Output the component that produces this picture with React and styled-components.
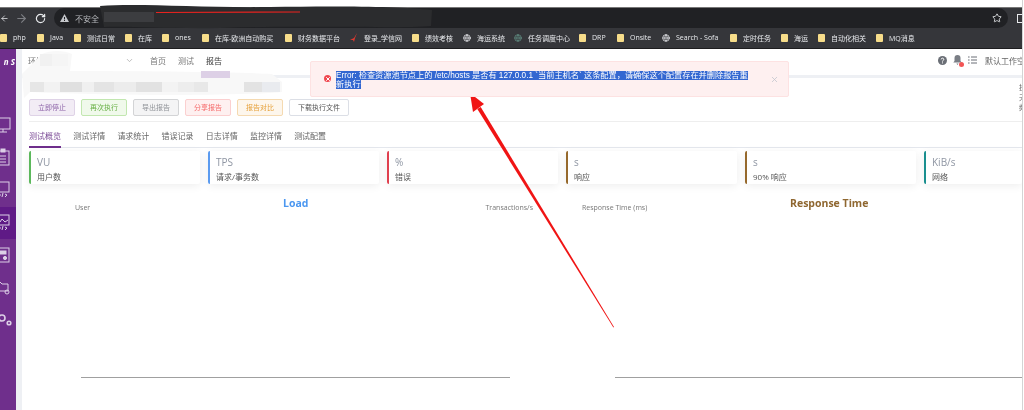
import React from 'react'
import styled, { createGlobalStyle } from 'styled-components'
import { ArrowLeft, ArrowRight, RotateCw, Star, Globe, ChevronDown, X } from 'lucide-react'

const bookmarks = [
  { label: 'php', step: 37 },
  { label: 'Java', step: 37 },
  { label: '测试日常', step: 51 },
  { label: '在库', step: 37 },
  { label: 'ones', step: 40 },
  { label: '在库-欧洲自动购买', step: 83 },
  { label: '财务数据平台', step: 65 },
  { label: '登录_学信网', kind: 'red', step: 62 },
  { label: '绩效考核', step: 51 },
  { label: '海运系统', kind: 'globe', step: 51 },
  { label: '任务调度中心', kind: 'dim', step: 65 },
  { label: 'DRP', step: 38 },
  { label: 'Onsite', step: 45 },
  { label: 'Search - Sofa', kind: 'globe', step: 68 },
  { label: '定时任务', step: 51 },
  { label: '海运', step: 37 },
  { label: '自动化相关', step: 58 },
  { label: 'MQ消息', step: 40 },
]

const actions = [
  { label: '立即停止', bg: '#f2ecf5', line: '#dfd3e7', fg: '#8c62a8' },
  { label: '再次执行', bg: '#f0f9eb', line: '#c2e7b0', fg: '#67b044' },
  { label: '导出报告', bg: '#f4f4f5', line: '#d3d4d6', fg: '#909399' },
  { label: '分享报告', bg: '#fef0f0', line: '#fbd0d0', fg: '#f56c6c' },
  { label: '报告对比', bg: '#fdf6ec', line: '#f5dab1', fg: '#e6a23c' },
  { label: '下载执行文件', bg: '#ffffff', line: '#dcdfe6', fg: '#555' },
]

const tabs = ['测试概览', '测试详情', '请求统计', '错误记录', '日志详情', '监控详情', '测试配置']

const stats = [
  { unit: 'VU', label: '用户数', color: '#5cb85c' },
  { unit: 'TPS', label: '请求/事务数', color: '#5b9bf0' },
  { unit: '%', label: '错误', color: '#e0404f' },
  { unit: 's', label: '响应', color: '#96692c' },
  { unit: 's', label: '90% 响应', color: '#96692c' },
  { unit: 'KiB/s', label: '网络', color: '#1a8f8f' },
]

const mosaic = [
  [30, 82, 14, 10, '#e6e6e6'], [44, 82, 16, 10, '#f2f2f2'], [60, 82, 22, 10, '#e0e0e0'], [82, 82, 12, 10, '#f0f0f0'],
  [94, 82, 20, 10, '#e4e4e4'], [114, 82, 22, 10, '#ececec'], [136, 82, 26, 10, '#e2e2e2'], [162, 82, 16, 10, '#f3f3f3'],
  [178, 82, 16, 10, '#ededed'], [194, 82, 14, 10, '#e8e8e8'], [244, 82, 18, 10, '#e3e3e3'], [262, 82, 18, 10, '#e9ebef'],
  [40, 54, 12, 12, '#f1f1f1'], [52, 54, 16, 12, '#f5f5f5'],
]

const Global = createGlobalStyle`
  html, body { margin: 0; padding: 0; background: #fff; }
  body { font-family: "Open Sans", "Noto Sans CJK SC", sans-serif; }
`

const SideIcon = ({ index }) => {
  const common = { fill: 'none', stroke: '#dccfe6', strokeWidth: 1 }
  return (
    <svg width="16" height="20" viewBox="0 0 16 20">
      {index === 0 && (
        <g {...common}>
          <rect x="-6" y="3" width="16" height="11" />
          <path d="M-1 17h8M3 14v3" />
        </g>
      )}
      {index === 1 && (
        <g {...common}>
          <rect x="-3" y="3" width="12" height="14" />
          <path d="M0 8h6M0 11h6M0 14h6" />
          <rect x="1" y="1" width="4" height="3" fill="#dccfe6" />
        </g>
      )}
      {index === 2 && (
        <g {...common}>
          <rect x="-4" y="2" width="13" height="10" />
          <path d="M-2 15h3M3 13l-1 4M5 14l2 1-2 2" />
        </g>
      )}
      {index === 3 && (
        <g {...common}>
          <rect x="-4" y="2" width="13" height="10" />
          <path d="M-3 7l3 2 2-3 3 3 3-2M-2 15h3M3 13l-1 4M5 14l2 1-2 2" />
        </g>
      )}
      {index === 4 && (
        <g {...common}>
          <rect x="-4" y="3" width="13" height="14" />
          <rect x="0" y="6" width="6" height="3" fill="#dccfe6" />
          <circle cx="5" cy="13" r="1.6" fill="#dccfe6" />
        </g>
      )}
      {index === 5 && (
        <g {...common}>
          <path d="M-5 4h5l2 2h6v7h-13z" />
          <circle cx="7" cy="14" r="2" />
        </g>
      )}
      {index === 6 && (
        <g {...common} strokeWidth="1.6">
          <circle cx="2" cy="8" r="3" />
          <circle cx="9" cy="13" r="1.8" />
        </g>
      )}
    </svg>
  )
}

export default function App() {
  return (
    <Page>
      <Global />
      <TopStrip />
      <Toolbar>
        <NavIcon $width={9} $after={3}>
          <ArrowLeft size={13} color="#e8eaed" />
        </NavIcon>
        <NavIcon $width={19}>
          <ArrowRight size={13} color="#7d7f84" />
        </NavIcon>
        <NavIcon $width={19} $after={4}>
          <RotateCw size={11} color="#e8eaed" strokeWidth={2.6} />
        </NavIcon>
        <Omnibox>
          <svg width="9" height="8" viewBox="0 0 9 8">
            <path d="M4.5 0L9 8H0z" fill="#c4c6ca" />
            <path d="M4.5 3v2.4M4.5 6v1" stroke="#202124" />
          </svg>
          <Insecure>不安全</Insecure>
          <UrlBar>|</UrlBar>
          <Star size={10} color="#e8eaed" strokeWidth={2} />
        </Omnibox>
        <ExtensionBox>
          <ExtensionGlyph />
        </ExtensionBox>
      </Toolbar>
      <BookmarkBar>
        {bookmarks.map(b => (
          <Bookmark key={b.label} $step={b.step}>
            {!b.kind && <Folder />}
            {b.kind === 'globe' && <Globe size={8} color="#dfe1e5" strokeWidth={2.4} />}
            {b.kind === 'dim' && <Globe size={8} color="#5f8a80" strokeWidth={2.4} />}
            {b.kind === 'red' && (
              <svg width="8" height="9" viewBox="0 0 8 9">
                <path d="M7 0L4 5 0 7l3 0 1 2 1-4z" fill="#e03a30" />
              </svg>
            )}
            <span>{b.label}</span>
          </Bookmark>
        ))}
      </BookmarkBar>
      <Body>
        <Sidebar>
          <Logo>n S</Logo>
          {[0, 1, 2, 3, 4, 5, 6].map(i => (
            <SideItem key={i} $active={i === 3}>
              <SideIcon index={i} />
            </SideItem>
          ))}
        </Sidebar>
        <Gutter />
        <Main>
          <Header>
            <EnvSelect>
              <span>环境</span>
              <ChevronDown size={9} color="#aaa" />
            </EnvSelect>
            <NavLink>首页</NavLink>
            <NavLink>测试</NavLink>
            <NavLink $active>报告</NavLink>
            <HeaderRight>
              <svg width="9" height="9" viewBox="0 0 9 9">
                <circle cx="4.5" cy="4.5" r="4.5" fill="#6b6f76" />
                <path d="M3.2 3.4a1.3 1.3 0 1 1 1.9 1.2c-.4.2-.6.4-.6.9M4.5 6.4v1" stroke="#fff" fill="none" />
              </svg>
              <BellWrap>
                <svg width="9" height="10" viewBox="0 0 9 10">
                  <path d="M4.5 0a3 3 0 0 1 3 3v3l1.2 1.5H.3L1.5 6V3a3 3 0 0 1 3-3zM3.4 8.4h2.2L4.5 10z" fill="#7a7e85" />
                </svg>
                <BellDot />
              </BellWrap>
              <svg width="9" height="8" viewBox="0 0 9 8">
                <path d="M3 1h6M3 4h6M3 7h6M0 1h1.6M0 4h1.6M0 7h1.6" stroke="#6b6f76" />
              </svg>
              <Workspace>默认工作空间</Workspace>
            </HeaderRight>
          </Header>
          <Band />
          <ReportPanel>
            <ActionRow>
              {actions.map(a => (
                <ActionButton key={a.label} $bg={a.bg} $line={a.line} $fg={a.fg}>
                  {a.label}
                </ActionButton>
              ))}
            </ActionRow>
            <SideNote>
              扰
              <br />
              无
              <br />
              频
            </SideNote>
          </ReportPanel>
          <Tabs>
            {tabs.map((t, i) => (
              <Tab key={t} $active={i === 0}>
                {t}
              </Tab>
            ))}
          </Tabs>
          <CardRow>
            {stats.map(s => (
              <StatCard key={s.label} $color={s.color}>
                <Unit>{s.unit}</Unit>
                <StatLabel>{s.label}</StatLabel>
              </StatCard>
            ))}
          </CardRow>
          <Charts>
            <ChartPanel>
              <ChartHead $inset={46}>
                <AxisName>User</AxisName>
                <ChartTitle $color="#4b97f0">Load</ChartTitle>
                <AxisName $end>Transactions/s</AxisName>
              </ChartHead>
              <Plot $left={52} $right={35} />
            </ChartPanel>
            <ChartPanel>
              <ChartHead $inset={37}>
                <AxisName>Response Time (ms)</AxisName>
                <ChartTitle $color="#8f6730">Response Time</ChartTitle>
              </ChartHead>
              <Plot $left={70} $right={0} />
            </ChartPanel>
          </Charts>
        </Main>
      </Body>

      <Redactions width="1024" height="410" viewBox="0 0 1024 410">
        <path
          d="M100 6C140 3 200 8 270 7C330 6 400 6 432 10L431 26C400 29 300 25 220 28C170 29 130 26 104 27z"
          fill="#2b2c2e"
        />
        <rect x="104" y="12" width="50" height="10" fill="#3c3d40" />
        <path d="M156 12.5L300 12" stroke="#e8231f" strokeWidth="1.2" />
        <path
          d="M22 74L42 54C50 50 64 50 72 54L70 71C140 71 240 72 272 74L282 82L282 92C240 96 120 96 30 92L24 98z"
          fill="#f8f8f8"
        />
        <rect x="201" y="71" width="29" height="7" fill="#ddd0e6" />
        {mosaic.map(([x, y, w, h, c]) => (
          <rect key={x} x={x} y={y} width={w} height={h} fill={c} />
        ))}
        <polygon points="614,327 613.4,327.4 477.3,109 480.7,107" fill="#f01414" />
        <polygon points="470,93 484,104 473,112" fill="#f01414" />
      </Redactions>

      <Alert>
        <ErrorDot>
          <X size={6} color="#fff" strokeWidth={4} />
        </ErrorDot>
        <AlertText>
          <Selected>
            Error: 检查资源池节点上的 /etc/hosts 是否有 127.0.0.1 `当前主机名` 这条配置，请确保这个配置存在并删除报告重新执行
          </Selected>
        </AlertText>
        <CloseIcon>
          <X size={9} color="#c0c4cc" />
        </CloseIcon>
      </Alert>
    </Page>
  )
}

const Page = styled.div`
  position: relative;
  width: 1022px;
  height: 410px;
  overflow: hidden;
  display: flex;
  flex-direction: column;
  background: #fff;
  border-right: 1px solid #d4d4d4;
  filter: blur(0.3px);
`

const TopStrip = styled.div`
  height: 7px;
  background: #fff;
  border-bottom: 1px solid #777;
`

const Toolbar = styled.div`
  height: 20px;
  display: flex;
  align-items: center;
  background: #35363a;
`

const NavIcon = styled.div`
  width: ${p => p.$width}px;
  margin-right: ${p => p.$after || 0}px;
  flex: none;
  display: flex;
  justify-content: center;
`

const Omnibox = styled.div`
  flex: 1;
  height: 20px;
  padding: 0 6px 0 6px;
  display: flex;
  align-items: center;
  background: #202124;
  border-radius: 10px;
`

const Insecure = styled.span`
  margin-left: 6px;
  color: #b5b7bb;
  font-size: 8px;
`

const UrlBar = styled.span`
  flex: 1;
  margin-left: 4px;
  color: #777;
  font-size: 8px;
`

const ExtensionBox = styled.div`
  width: 14px;
  flex: none;
  display: flex;
  justify-content: flex-end;
`

const ExtensionGlyph = styled.i`
  width: 4px;
  height: 7px;
  border: 1px solid #e8eaed;
  border-right: 0;
`

const BookmarkBar = styled.div`
  height: 21px;
  display: flex;
  align-items: center;
  padding-bottom: 1px;
  box-sizing: border-box;
  overflow: hidden;
  background: #35363a;
  border-bottom: 1px solid #1d1d1f;
`

const Bookmark = styled.div`
  display: flex;
  align-items: center;
  flex: none;
  gap: 6px;
  width: ${p => p.$step}px;
  white-space: nowrap;
  color: #e8eaed;
  font-size: 7px;
`

const Folder = styled.i`
  display: block;
  flex: none;
  width: 7px;
  height: 8px;
  background: #f7dd8a;
  border-radius: 1px;
`

const Body = styled.div`
  flex: 1;
  display: flex;
  min-height: 0;
`

const Sidebar = styled.aside`
  width: 16px;
  flex: none;
  background: #6f2f8c;
  overflow: hidden;
  display: flex;
  flex-direction: column;
`

const Logo = styled.div`
  height: 25px;
  margin-bottom: 35px;
  padding: 8px 1px 0 0;
  box-sizing: border-box;
  color: #fff;
  font-size: 8px;
  line-height: 10px;
  font-weight: 700;
  font-style: italic;
  text-align: right;
  white-space: nowrap;
`

const SideItem = styled.div`
  height: 32.5px;
  flex: none;
  display: flex;
  align-items: center;
  background: ${p => (p.$active ? '#5f1a86' : 'transparent')};
`

const Gutter = styled.div`
  width: 6px;
  flex: none;
  background: #eef0f4;
`

const Main = styled.main`
  flex: 1;
  min-width: 0;
  display: flex;
  flex-direction: column;
  overflow: hidden;
`

const Header = styled.header`
  height: 26px;
  flex: none;
  display: flex;
  align-items: center;
  padding-bottom: 4px;
  box-sizing: border-box;
  color: #666;
  font-size: 8px;
`

const EnvSelect = styled.div`
  width: 106px;
  margin-left: 6px;
  margin-right: 16px;
  display: flex;
  align-items: center;
  justify-content: space-between;
  color: #777;
`

const NavLink = styled.span`
  width: 28px;
  color: ${p => (p.$active ? '#333' : '#777')};
`

const HeaderRight = styled.div`
  margin-left: auto;
  display: flex;
  align-items: center;
  gap: 6px;
`

const BellWrap = styled.span`
  position: relative;
  display: flex;
`

const BellDot = styled.i`
  position: absolute;
  right: -2px;
  bottom: -2px;
  width: 5px;
  height: 5px;
  border-radius: 50%;
  background: #f25555;
`

const Workspace = styled.span`
  width: 37px;
  margin-left: 2px;
  white-space: nowrap;
  overflow: hidden;
`

const Band = styled.div`
  height: 3px;
  flex: none;
  background: #eef0f4;
`

const ReportPanel = styled.section`
  height: 44px;
  flex: none;
  display: flex;
  justify-content: space-between;
  box-sizing: border-box;
  margin-left: 7px;
  padding-top: 21px;
  border-bottom: 1px solid #eeeeee;
`

const ActionRow = styled.div`
  display: flex;
  gap: 6px;
  height: 17px;
`

const ActionButton = styled.button`
  height: 17px;
  padding: 0 8px;
  border: 1px solid ${p => p.$line};
  border-radius: 2px;
  background: ${p => p.$bg};
  color: ${p => p.$fg};
  font-family: inherit;
  font-size: 7px;
  line-height: 15px;
`

const SideNote = styled.div`
  width: 3px;
  margin-top: -16px;
  overflow: hidden;
  color: #666;
  font-size: 7px;
  line-height: 10px;
`

const Tabs = styled.nav`
  height: 26px;
  flex: none;
  display: flex;
  gap: 12.2px;
  margin-left: 7px;
  box-sizing: border-box;
  border-bottom: 1px solid #e4e7ed;
`

const Tab = styled.div`
  height: 26px;
  box-sizing: border-box;
  padding-top: 8px;
  color: ${p => (p.$active ? '#7b4a96' : '#666')};
  font-size: 8px;
  line-height: 12px;
  border-bottom: 2px solid ${p => (p.$active ? '#6f2f8c' : 'transparent')};
`

const CardRow = styled.div`
  flex: none;
  display: grid;
  grid-template-columns: repeat(5, 171px) 1fr;
  gap: 8px;
  margin: 3px 0 0 7px;
  height: 33px;
`

const StatCard = styled.div`
  box-sizing: border-box;
  padding: 5px 0 0 6px;
  background: #fff;
  border-left: 2px solid ${p => p.$color};
  border-radius: 2px;
  box-shadow: 0 2px 8px rgba(0, 0, 0, 0.07);
`

const Unit = styled.div`
  color: #8f96a3;
  font-size: 10px;
  line-height: 12px;
`

const StatLabel = styled.div`
  margin-top: 3px;
  color: #555;
  font-size: 8px;
  line-height: 11px;
`

const Charts = styled.div`
  flex: 1;
  display: grid;
  grid-template-columns: 516px 1fr;
  margin-left: 7px;
  min-height: 0;
`

const ChartPanel = styled.div`
  display: flex;
  flex-direction: column;
  min-width: 0;
`

const ChartHead = styled.div`
  height: 21px;
  flex: none;
  margin-top: 11px;
  margin-left: ${p => p.$inset}px;
  margin-right: 12px;
  display: grid;
  grid-template-columns: 208px auto 1fr;
  align-items: start;
`

const AxisName = styled.span`
  margin-top: 8px;
  color: #777;
  font-size: 7px;
  line-height: 10px;
  justify-self: ${p => (p.$end ? 'end' : 'start')};
`

const ChartTitle = styled.span`
  color: ${p => p.$color};
  font-size: 10.5px;
  line-height: 16px;
  font-weight: 700;
`

const Plot = styled.div`
  height: 161px;
  flex: none;
  margin-left: ${p => p.$left}px;
  margin-right: ${p => p.$right}px;
  border-bottom: 1px solid #a0a0a0;
`

const Redactions = styled.svg`
  position: absolute;
  left: 0;
  top: 0;
  pointer-events: none;
`

const Alert = styled.div`
  position: absolute;
  left: 310px;
  top: 61px;
  width: 479px;
  height: 36px;
  box-sizing: border-box;
  padding: 9px 0 0 13px;
  display: flex;
  gap: 5px;
  background: #fef0f0;
  border: 1px solid #fde2e2;
  border-radius: 2px;
`

const ErrorDot = styled.span`
  width: 7px;
  height: 7px;
  margin-top: 4px;
  flex: none;
  display: flex;
  align-items: center;
  justify-content: center;
  border-radius: 50%;
  background: #f0474f;
`

const AlertText = styled.div`
  width: 414px;
  font-family: "Liberation Sans", "Noto Sans CJK SC", sans-serif;
  font-size: 8.2px;
  line-height: 9px;
`

const Selected = styled.span`
  background: #3367d1;
  color: #fff;
`

const CloseIcon = styled.span`
  position: absolute;
  right: 9px;
  top: 13px;
  display: flex;
`
